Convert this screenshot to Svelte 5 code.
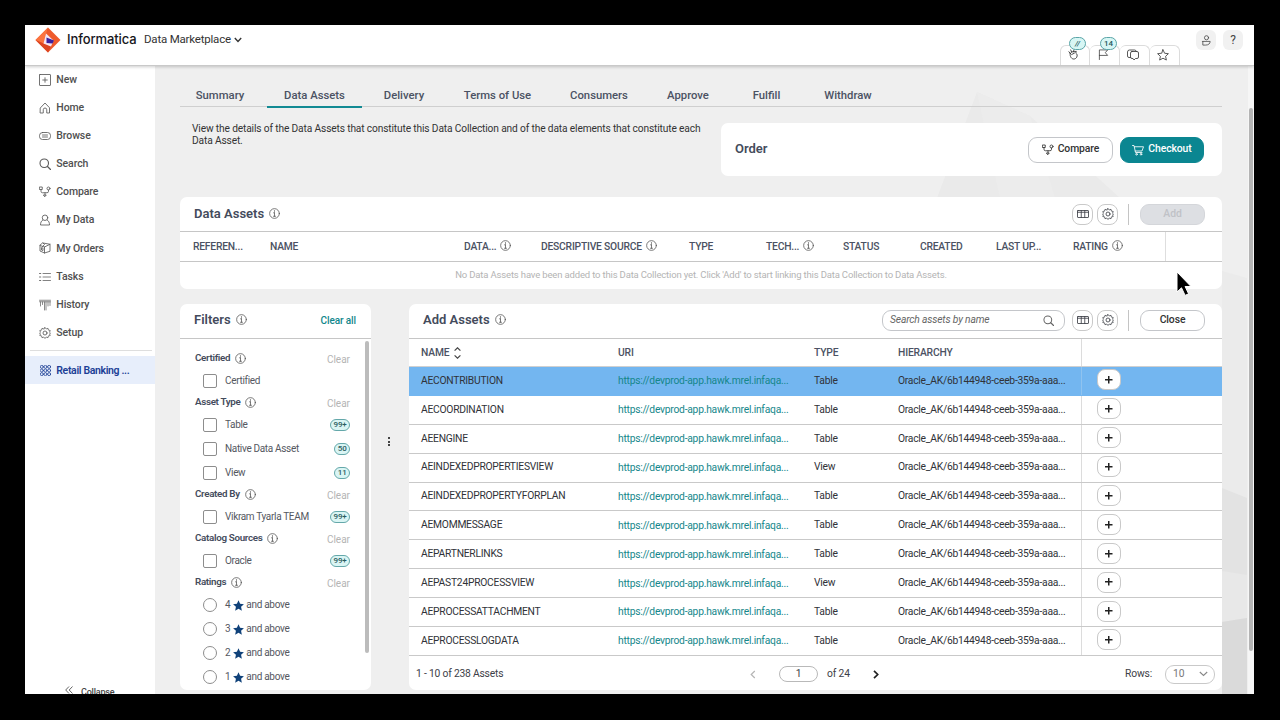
<script>
  const tabs = [
    ['Summary', 80], ['Data Assets', 95], ['Delivery', 72], ['Terms of Use', 103],
    ['Consumers', 88], ['Approve', 78], ['Fulfill', 67], ['Withdraw', 84]
  ];
  const nav = [
    ['New', 'new'], ['Home', 'home'], ['Browse', 'browse'], ['Search', 'search'],
    ['Compare', 'compare'], ['My Data', 'user'], ['My Orders', 'box'], ['Tasks', 'tasks'],
    ['History', 'history'], ['Setup', 'gear']
  ];
  const topCols = [
    ['REFEREN...'], ['NAME'], ['DATA...', true], ['DESCRIPTIVE SOURCE', true], ['TYPE'],
    ['TECH...', true], ['STATUS'], ['CREATED'], ['LAST UP...'], ['RATING', true]
  ];
  const rows = [
    ['AECONTRIBUTION', 'Table'], ['AECOORDINATION', 'Table'], ['AEENGINE', 'Table'],
    ['AEINDEXEDPROPERTIESVIEW', 'View'], ['AEINDEXEDPROPERTYFORPLAN', 'Table'],
    ['AEMOMMESSAGE', 'Table'], ['AEPARTNERLINKS', 'Table'], ['AEPAST24PROCESSVIEW', 'View'],
    ['AEPROCESSATTACHMENT', 'Table'], ['AEPROCESSLOGDATA', 'Table']
  ];
  const filters = [
    { title: 'Certified', items: [['Certified', '']] },
    { title: 'Asset Type', items: [['Table', '99+'], ['Native Data Asset', '50'], ['View', '11']] },
    { title: 'Created By', items: [['Vikram Tyarla TEAM', '99+']] },
    { title: 'Catalog Sources', items: [['Oracle', '99+']] },
    { title: 'Ratings', stars: [4, 3, 2, 1], items: [] }
  ];
</script>

{#snippet icon(name, size = 12)}
  <svg class="ic" width={size} height={size} viewBox="0 0 24 24" fill="none" stroke="currentColor" stroke-width="1.7" stroke-linecap="round" stroke-linejoin="round">
    {#if name === 'new'}
      <rect x="1" y="1" width="22" height="22" rx="1" /><path d="M12 7.5v9M7.5 12h9" />
    {:else if name === 'home'}
      <path d="M3 11.500 12 2l9 9.500V22h-5.500v-6.500a3.500 3.500 0 0 0-7 0V22H3z" />
    {:else if name === 'browse'}
      <rect x="1" y="5" width="22" height="14" rx="6" /><path d="M7 10h10M7 14h10" />
    {:else if name === 'search'}
      <circle cx="10.500" cy="10.500" r="8.500" stroke-width="2.200" /><path d="m17 17 6 6" stroke-width="2.600" />
    {:else if name === 'compare'}
      <rect x="1.500" y="2" width="5" height="5" /><circle cx="19" cy="5" r="3" /><path d="M4 7v3.500a3 3 0 0 0 3 3h9a3 3 0 0 0 3-3V8M12 13.500V18M9.500 18h5L12 21z" />
    {:else if name === 'user'}
      <circle cx="12" cy="7.500" r="5.500" /><path d="M7.500 12C4.500 14 3 17 3 22h18c0-5-1.500-8-4.500-10" />
    {:else if name === 'box'}
      <path d="m8 2 14 2.500v14L11 22 2 18V7zM2 7l9 3 11-5.500M11 10v12M8 2l3 3-4 4M5 12v4l3 1v-4z" />
    {:else if name === 'tasks'}
      <path d="M8 5h15M8 12h15M8 19h15" stroke-width="1.500" /><path d="M1 5h2.500M1 12h2.500M1 19h2.500" stroke-width="1.700" />
    {:else if name === 'history'}
      <path d="M1 2.500h22M1 5.500h22M3 6v8M7 6v5M11 6v16M14 6v16M18 6v8M22 6v7" stroke-width="1.400" />
    {:else if name === 'gear'}
      <path stroke-width="1.500" d="m12 1 2.500 3 3.500-1.500.8 3.700 3.700.8L21 10.500l2 1.500-2 2 1.500 3-3.700.8-.8 3.700-3.500-1.500L12 23l-2.500-3L6 21.500l-.8-3.700-3.700-.8L3 14l-2-2 2-1.500L1.500 7l3.700-.8L6 2.500 9.500 4z" /><circle cx="12" cy="12" r="4" />
    {:else if name === 'collection'}
      {#each [4, 12, 20] as cy}{#each [4, 12, 20] as cx}<circle {cx} {cy} r="3.300" />{/each}{/each}
    {:else if name === 'info'}
      <circle cx="12" cy="12" r="10.600" stroke-width="1.700" /><path d="M12 10.500V18M10 10.500h2M9.800 18h4.400" /><path d="M12 6v.8" stroke-width="2.600" />
    {:else if name === 'columns'}
      <rect x="1" y="5" width="22" height="14" rx="1" /><path d="M1 8.500h22M8.500 5v14M15.500 5v14" />
    {:else if name === 'cart'}
      <path d="M1 3h3l3 14h13M5 5.500h18l-3 8.500H6.500" /><circle cx="9" cy="20.500" r="1.600" /><circle cx="18" cy="20.500" r="1.600" />
    {:else if name === 'flag'}
      <path d="M3 23V2h18l-5 6 5 6H3" />
    {:else if name === 'chat'}
      <path d="M7 17H4a3 3 0 0 1-3-3V6a4 4 0 0 1 4-4h10a4 4 0 0 1 4 3" /><path d="M10 5h10a3 3 0 0 1 3 3v8a3 3 0 0 1-3 3h-3l-3 3-2-3h-2a3 3 0 0 1-3-3V8a3 3 0 0 1 3-3z" />
    {:else if name === 'star'}
      <path d="m12 1.500 3.200 7 7.600.9-5.600 5.200 1.500 7.500-6.700-3.700-6.700 3.700 1.500-7.500-5.600-5.200 7.600-.9z" />
    {:else if name === 'bug'}
      <path stroke-width="2" d="M5 10c1-3 4-5 8-4l5-1-1 4c3 2 4 5 2 9-3 5-9 5-12 1-2-3-3-6-2-9zM5 10l-3-4M8 7 6 2M12 6l1-4M8 12l6-3" />
    {:else if name === 'account'}
      <circle cx="12" cy="6" r="4.500" /><path d="M4 14v8h6c6 0 10-3 10-8H4z" />
    {/if}
  </svg>
{/snippet}

<div class="stage">
  <div class="app">
    <header>
      <svg class="logo" width="26" height="26" viewBox="0 0 26 26">
        <path d="M13 .5 25.500 13 13 25.500.5 13z" fill="#ee5a2c" />
        <path d="M13 .5.5 13l8 3.500 2-8.500z" fill="#fb7440" />
        <path d="M.5 13 13 25.500l3-6-7.500-3z" fill="#dc4522" />
        <path d="M11 6.500 18.500 13.500l-2.500 6-7.500-3z" fill="#f4e6f2" />
        <path d="m11.500 10.500 7.500 3-1.500 3-6-.5z" fill="#3a20a0" />
      </svg>
      <span class="brand">Informatica</span>
      <span class="product">Data Marketplace</span>
      <svg class="chev" width="8" height="6" viewBox="0 0 8 6" fill="none" stroke="#333" stroke-width="1.400"><path d="M.8 1 4 4.400 7.200 1" /></svg>
      <div class="htabs">
        <span class="htab">{@render icon('bug', 11)}<b class="hb hatch">//</b></span>
        <span class="htab">{@render icon('flag', 11)}<b class="hb">14</b></span>
        <span class="htab">{@render icon('chat', 12)}</span>
        <span class="htab">{@render icon('star', 12)}</span>
      </div>
      <span class="round first">{@render icon('account', 11)}</span>
      <span class="round">?</span>
    </header>

    <div class="body">
      <nav>
        {#each nav as [label, ic]}
          <div class="ni">{@render icon(ic)}<span>{label}</span></div>
        {/each}
        <div class="rule"></div>
        <div class="ni active">{@render icon('collection', 11)}<span>Retail Banking ...</span></div>
        <div class="collapse">
          <svg width="8" height="8" viewBox="0 0 8 8" fill="none" stroke="#555" stroke-width=".9"><path d="M4 .5.700 4 4 7.500M7.500.5 4.200 4l3.300 3.500" /></svg>
          <span>Collapse</span>
        </div>
      </nav>

      <main>
        <svg class="art" width="1092" height="629" viewBox="0 0 1092 629">
          <path d="M822 26 875 50 965 132H782z" fill="#eaeaea" />
          <path d="M822 26 875 50 900 132H845z" fill="#ececec" />
          <path d="M1067 205 1092 212V440l-25-18z" fill="#ebebeb" />
          <path d="M1067 422 1092 432V560h-25z" fill="#e3e3e3" />
          <path d="M1067 505 1092 509V552l-25 4z" fill="#e8e8e8" />
          <path d="M1067 556 1092 552v77h-25z" fill="#dadada" />
        </svg>
        <div class="content">
          <div class="tabs">
            {#each tabs as [label, w], i}
              <span class="tab" class:on={i === 1} style="width:{w}px">{label}</span>
            {/each}
          </div>
          <div class="intro">
            <p>View the details of the Data Assets that constitute this Data Collection and of the data elements that constitute each Data Asset.</p>
            <div class="order">
              <h2>Order</h2>
              <span class="btn cmp">{@render icon('compare', 12)}Compare</span>
              <span class="btn chk">{@render icon('cart', 12)}Checkout</span>
            </div>
          </div>

          <section class="panel assets">
            <div class="ph">
              <h2>Data Assets</h2>{@render icon('info', 11)}
              <span class="sq push">{@render icon('columns', 12)}</span>
              <span class="sq">{@render icon('gear', 12)}</span>
              <i class="sep"></i>
              <span class="btn add">Add</span>
            </div>
            <div class="cols">
              {#each topCols as [c, info]}
                <span>{c}{#if info}{@render icon('info', 11)}{/if}</span>
              {/each}
              <span class="last"></span>
            </div>
            <div class="empty">No Data Assets have been added to this Data Collection yet. Click 'Add' to start linking this Data Collection to Data Assets.</div>
          </section>

          <div class="split">
            <section class="panel filters">
              <div class="ph"><h2>Filters</h2>{@render icon('info', 11)}<span class="clearall push">Clear all</span></div>
              <div class="flist">
                {#each filters as f}
                  <div class="fh"><b>{f.title}</b>{@render icon('info', 11)}<span class="clear push">Clear</span></div>
                  {#each f.items as [label, n]}
                    <div class="fi"><i class="box"></i><span>{label}</span>{#if n}<em class="push">{n}</em>{/if}</div>
                  {/each}
                  {#each f.stars ?? [] as s}
                    <div class="fi">
                      <i class="radio"></i><span>{s}</span>
                      <svg class="st" width="11" height="11" viewBox="0 0 24 24"><path d="m12 .5 3.500 7.800 8.300.9-6.200 5.700 1.700 8.300L12 19l-7.300 4.200 1.700-8.300L.2 9.200l8.300-.9z" fill="#10427a" /></svg>
                      <span class="above">and above</span>
                    </div>
                  {/each}
                {/each}
                <div class="fthumb"></div>
              </div>
            </section>
            <div class="grip"><i></i><i></i><i></i></div>
            <section class="panel list">
              <div class="ph">
                <h2>Add Assets</h2>{@render icon('info', 11)}
                <span class="search push">Search assets by name {@render icon('search', 11)}</span>
                <span class="sq">{@render icon('columns', 12)}</span>
                <span class="sq">{@render icon('gear', 12)}</span>
                <i class="sep"></i>
                <span class="btn close">Close</span>
              </div>
              <div class="row head">
                <span>NAME <svg class="sort" width="7" height="12" viewBox="0 0 7 12" fill="none" stroke="#444" stroke-width="1.200"><path d="M.6 3.600 3.500.800l2.900 2.800M.6 8.400l2.900 2.800 2.900-2.800" /></svg></span>
                <span>URI</span><span>TYPE</span><span>HIERARCHY</span><span class="act"></span>
              </div>
              {#each rows as [name, type], i}
                <div class="row" class:sel={i === 0}>
                  <span>{name}</span>
                  <span class="uri">https://devprod-app.hawk.mrel.infaqa...</span>
                  <span>{type}</span>
                  <span class="hier">Oracle_AK/6b144948-ceeb-359a-aaa...</span>
                  <span class="act"><b class="plus"></b></span>
                </div>
              {/each}
              <div class="foot">
                <span class="count">1 - 10 of 238 Assets</span>
                <svg width="6" height="9" viewBox="0 0 6 9" fill="none" stroke="#b5b5b5" stroke-width="1.200"><path d="M4.800 1 1.200 4.500l3.600 3.500" /></svg>
                <span class="page">1</span>
                <span class="of">of 24</span>
                <svg width="6" height="9" viewBox="0 0 6 9" fill="none" stroke="#222" stroke-width="1.700"><path d="m1 .8 3.700 3.700L1 8.200" /></svg>
                <span class="rl">Rows:</span>
                <span class="select">10 <svg width="9" height="6" viewBox="0 0 9 6" fill="none" stroke="#888" stroke-width="1.100"><path d="m.8 1 3.700 3.500L8.200 1" /></svg></span>
              </div>
            </section>
          </div>
        </div>
        <div class="scroll"><div class="thumb"></div></div>
      </main>
    </div>
    <svg class="cursor" width="16" height="26" viewBox="0 0 16 26"><path d="M1 1v20l4.500-4.200 3.600 7.600 3.500-1.600-3.500-7.300H15z" fill="#000" stroke="#fff" stroke-width="1" /></svg>
  </div>
</div>

<style>
  :global(body) { margin: 0; background: #000; }
  .stage { box-sizing: border-box; width: 1280px; height: 720px; padding: 25px 26px 26px 25px; background: #000; overflow: hidden; font: 400 10.300px/1.200 Roboto, sans-serif; color: #3d4047; }
  .stage :global(*) { box-sizing: border-box; }
  .app { position: relative; width: 1229px; height: 669px; background: #fff; overflow: hidden; display: flex; flex-direction: column; }
  .ic { flex: none; display: block; }
  .push { margin-left: auto; }
  h2 { margin: 0; font-size: 13px; line-height: 16px; font-weight: 600; color: #444b5c; }

  header { position: relative; z-index: 2; flex: none; height: 41px; display: flex; align-items: flex-start; padding-left: 10px; background: #fff; border-bottom: 1px solid #c9c9c9; box-shadow: 0 1px 3px #0003; }
  .logo { margin-top: 2px; }
  .brand { margin: 5px 0 0 6px; font: 450 13px/18px Inter, sans-serif; letter-spacing: -.1px; color: #16161a; width: 77px; }
  .product { margin-top: 6px; font-size: 11.500px; letter-spacing: -.2px; line-height: 16px; width: 90px; color: #333; white-space: nowrap; }
  .chev { margin-top: 12px; }
  .htabs { display: flex; margin-left: auto; margin-top: 20px; height: 20px; }
  .htab { position: relative; width: 30px; display: flex; justify-content: center; padding: 3px 3px 0 0; border: 1px solid #dcdcdc; border-bottom: 0; border-radius: 6px 6px 0 0; color: #3c3c3c; }
  .htab + .htab { border-left-width: 0; }
  .hb { position: absolute; left: 10px; top: -9px; width: 17px; height: 13px; border: 1px solid #5aa5a8; border-radius: 7px; background: #d7f6f4; font: 500 8px/11px Roboto, sans-serif; text-align: center; color: #22585c; }
  .hatch { left: 8px; font-style: italic; }
  .round { width: 20px; height: 20px; margin: 5px 11px 0 7px; border-radius: 6px; background: #f1f1f1; display: grid; place-items: center; font-size: 12px; color: #444; }
  .round.first { margin: 5px 0 0 16px; }

  .body { flex: 1; min-height: 0; display: flex; }
  nav { width: 130px; background: #fff; display: flex; flex-direction: column; flex: none; font-size: 10.500px; letter-spacing: -.1px; }
  .ni { height: 28.150px; display: flex; align-items: center; gap: 5.300px; padding: 0 0 1px 14px; color: #5a5a5a; white-space: nowrap; flex: none; }
  .ni span { font-weight: 500; color: #505050; padding-top: 1px; }
  .rule { height: 1px; background: #dedede; margin: 3px 3px 5px 5px; flex: none; }
  .ni.active { background: #e7eefb; padding: 0 0 0 15px; height: 28px; color: #1c3f96; }
  .ni.active span { color: #1c3f96; font-weight: 600; letter-spacing: -.35px; }
  .collapse { margin-top: auto; height: 8px; display: flex; align-items: flex-start; gap: 8px; padding-left: 40px; font-size: 9px; line-height: 12px; letter-spacing: -.2px; font-weight: 500; color: #444; }

  main { position: relative; flex: 1; display: flex; background: #efefef; overflow: hidden; }
  .art { position: absolute; left: 0; top: 0; }
  .content { position: relative; width: 1042px; margin-left: 25px; }
  .tabs { display: flex; gap: 6px; height: 41px; border-bottom: 1px solid #cfcfcf; padding-top: 16px; }
  .tab { flex: none; text-align: center; height: 26px; line-height: 28px; font-size: 11.300px; font-weight: 500; color: #4b5263; white-space: nowrap; }
  .tab.on { border-bottom: 2px solid #128a93; margin-left: 1px; }
  .intro { display: flex; height: 90px; }
  p { margin: 16px 0 0 12px; width: 529px; padding-right: 15px; font-size: 10.200px; letter-spacing: -.14px; line-height: 11.500px; color: #333; }
  .order { width: 501px; height: 53px; margin-top: 16px; background: #fff; border-radius: 7px; display: flex; align-items: center; padding: 0 18px 1px 14px; }
  .order h2 { margin-right: auto; }
  .btn { display: flex; align-items: center; justify-content: center; gap: 4px; border: 1px solid #c4c6ca; border-radius: 9px; height: 21px; width: 65px; font-size: 10.400px; letter-spacing: -.1px; font-weight: 500; color: #333; background: #fff; }
  .cmp { width: 85px; height: 26px; margin-top: 1px; }
  .chk { width: 84px; height: 26px; margin-left: 7px; margin-top: 1px; background: #0b8691; border-color: #0b8691; color: #fff; }
  .panel { background: #fff; border-radius: 7px; overflow: hidden; }
  .assets { height: 92px; }
  .ph { height: 35px; border-bottom: 1px solid #c6c6c6; display: flex; align-items: center; padding: 0 17px 0 14px; }
  .split .ph { padding-bottom: 2px; }
  .ph > .ic, .fh .ic, .cols .ic { color: #555; }
  .ph > h2 + :global(.ic) { margin: 0 0 2px 5px; }
  .sq { width: 21px; height: 21px; border: 1px solid #c9c9c9; border-radius: 8px; display: grid; place-items: center; margin-right: 4px; }
  .sq.push { margin-left: auto; }
  .sep { width: 1px; height: 21px; background: #c4c4c4; margin: 0 11px 0 6px; }
  .btn.add { background: #dddfe3; border-color: #d4d6da; color: #c0c2c7; }
  .cols { display: grid; grid-template-columns: 77px 194px 77px 148px 77px 77px 77px 76px 77px 92px 1fr; padding-left: 13px; height: 30px; border-bottom: 1px solid #c6c6c6; color: #4b5263; font-size: 10.300px; letter-spacing: -.22px; font-weight: 500; }
  .cols span { display: flex; align-items: center; white-space: nowrap; gap: 4px; padding-top: 1px; }
  .cols :global(.ic) { margin: 0 0 3px 0; }
  .cols .last { border-left: 1px solid #dedede; }
  .empty { height: 26px; line-height: 25px; text-align: center; color: #b4b4b4; font-size: 9.500px; letter-spacing: -.16px; white-space: nowrap; }
  .split { display: flex; margin-top: 15px; height: 386px; }
  .filters { width: 191px; }
  .filters .ph { padding-right: 15px; }
  .clearall { color: #11878c; font-size: 10px; letter-spacing: -.1px; font-weight: 500; padding-top: 1px; }
  .flist { position: relative; padding: 10px 20px 0 15px; }
  .fh { height: 20px; display: flex; align-items: center; padding-bottom: 2px; color: #555; }
  .fh b { font-weight: 600; color: #444b5c; font-size: 9.800px; letter-spacing: -.32px; margin-right: 5px; }
  .clear { color: #b4b4b4; font-size: 10px; padding-top: 3px; margin-right: 1px; }
  .fi { height: 24px; display: flex; align-items: center; padding-left: 8px; color: #55585f; font-size: 10px; letter-spacing: -.33px; }
  .fi span { position: static; }
  .above { letter-spacing: -.45px; letter-spacing: -.3px; }
  .box, .radio { width: 14px; height: 14px; border: 1px solid #8d8d8d; border-radius: 2px; margin-right: 8px; }
  .radio { border-radius: 50%; }
  .st { margin: 0 2.500px 0 2.500px; }
  em { font: 500 8px/10px Roboto, sans-serif; letter-spacing: -.2px; border: 1px solid #64a8aa; background: #daf5f4; border-radius: 7px; height: 12px; padding: 0 2.500px; color: #2b5c60; margin-right: 1px; }
  .fthumb { position: absolute; right: 2px; top: 2px; width: 4px; height: 312px; border-radius: 2px; background: #bcbcbc; }
  .grip { width: 38px; display: flex; flex-direction: column; gap: 1.500px; align-items: center; padding: 133px 2px 0 0; }
  .grip i { width: 2px; height: 2px; background: #444; }
  .list { width: 813px; }
  .search { display: flex; align-items: center; justify-content: space-between; width: 183px; height: 21px; border: 1px solid #c4c6ca; border-radius: 9px; padding: 0 10px 0 7px; margin-right: 7px; font-style: italic; font-size: 10.300px; letter-spacing: -.17px; color: #666; }
  .row { display: grid; grid-template-columns: 197px 196px 84px 183px 1fr; padding-left: 12px; height: 28.900px; border-bottom: 1px solid #c9c9c9; color: #303238; font-size: 10.300px; letter-spacing: -.25px; font-weight: 450; white-space: nowrap; }
  .row > span { display: flex; align-items: center; }
  .row.head { height: 28px; color: #4b5263; border-color: #d0d0d0; font-weight: 500; letter-spacing: -.15px; }
  .row.head > span { padding-top: 1px; }
  .sort { margin: 0 0 1px 5px; }
  .row .uri { color: #15878b; padding-top: 1px; }
  .row .act { border-left: 1px solid #dcdcdc; padding: 0 0 2px 15px; }
  .row.sel { background: #73b6f0; border-color: #73b6f0; }
  .row.sel .act { border-color: #8fc3ef; }
  .plus { width: 24px; height: 21px; border: 1px solid #c9c9c9; border-radius: 8px; background: linear-gradient(#222, #222) center / 7.500px 1.500px no-repeat, linear-gradient(#222, #222) center / 1.500px 7.500px no-repeat, #fff; }
  .foot { display: flex; align-items: center; height: 35px; padding: 2px 7px 0 7px; font-size: 10.300px; letter-spacing: -.15px; }
  .count { width: 334px; letter-spacing: -.2px; }
  .page { width: 39px; height: 16px; margin-left: 23px; border: 1px solid #b9b9b9; border-radius: 8px; text-align: center; line-height: 14px; }
  .of { margin: 0 23px 0 9px; }
  .rl { margin-left: auto; }
  .select { width: 50px; height: 19px; margin-left: 13px; border: 1px solid #c9c9c9; border-radius: 9px; display: flex; align-items: center; justify-content: space-between; padding: 0 6px 0 7px; color: #777; letter-spacing: 0; }
  .scroll { position: absolute; right: 0; top: 0; bottom: 0; width: 6px; background: #f6f6f6; }
  .thumb { width: 4px; margin-left: 1px; margin-top: 42px; height: 543px; background: #b4b4b4; border-radius: 2px; }
  .cursor { position: absolute; left: 1151px; top: 246px; z-index: 5; }
</style>
